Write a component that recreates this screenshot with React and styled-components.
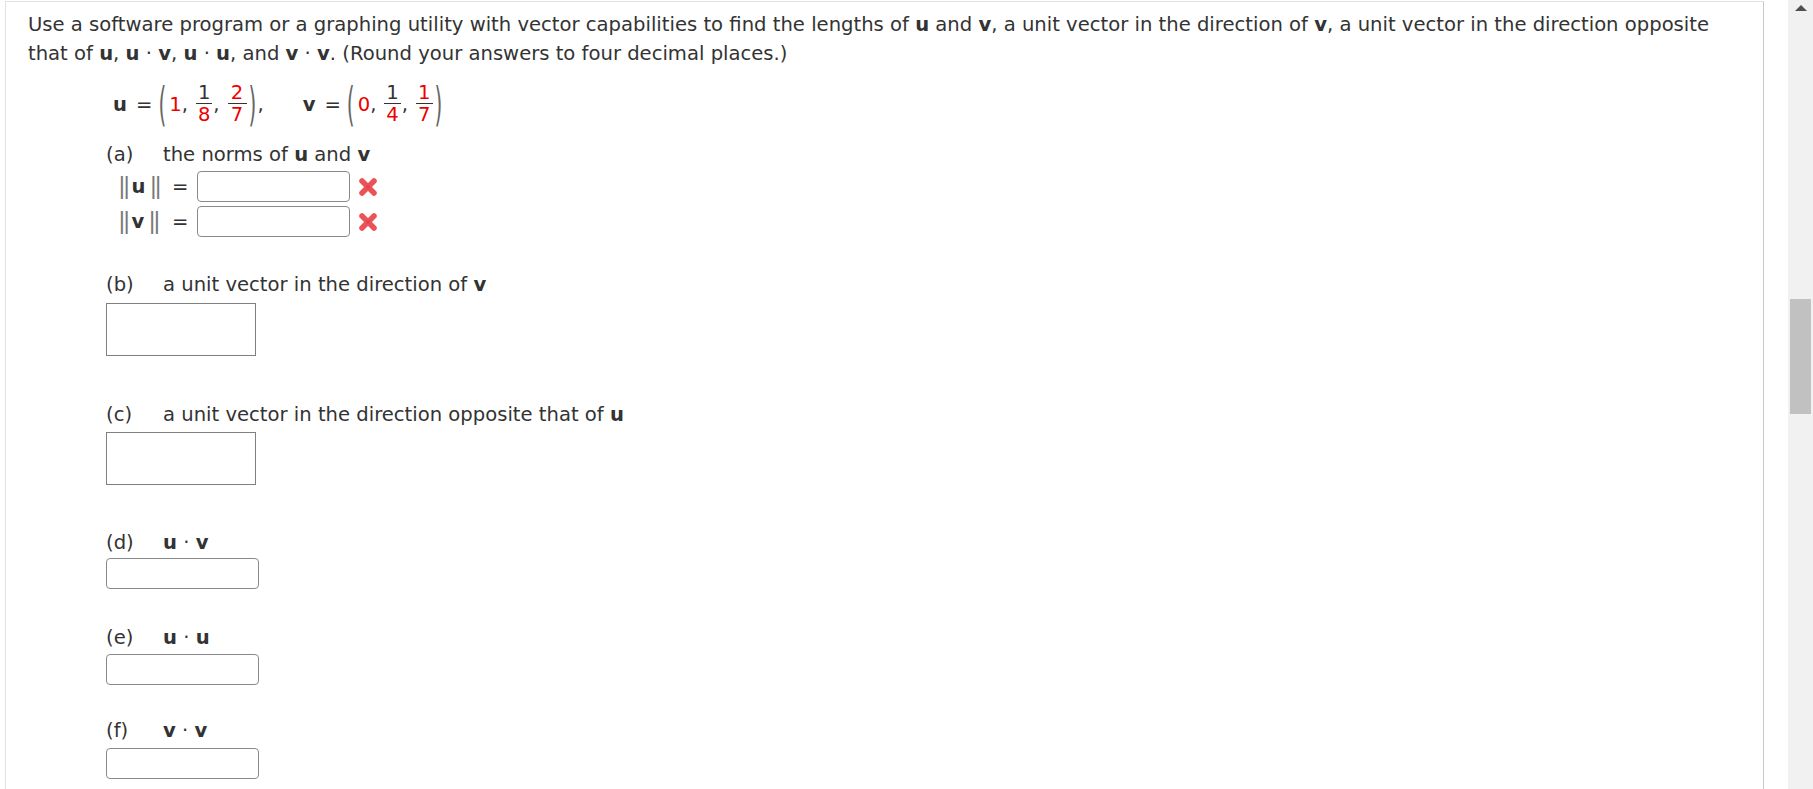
import React from 'react';
import styled, { createGlobalStyle } from 'styled-components';

const GlobalStyle = createGlobalStyle`
  html, body {
    margin: 0;
    padding: 0;
    background: #ffffff;
  }
  body {
    font-family: "DejaVu Sans", Verdana, sans-serif;
    color: #333333;
  }
`;

const XIcon = () => (
  <svg width="20" height="20" viewBox="0 0 20 20">
    <g strokeLinecap="round">
      <line x1="4" y1="4" x2="16" y2="16" stroke="#ea5358" strokeWidth="5.5" />
      <line x1="16" y1="4" x2="4" y2="16" stroke="#ea5358" strokeWidth="5.5" />
    </g>
    <circle cx="10" cy="10" r="1.8" fill="#dc444a" />
  </svg>
);

const App = () => {
  return (
    <Page>
      <GlobalStyle />
      <Main>
        <Frame>
          <Intro>
            Use a software program or a graphing utility with vector capabilities to find the lengths of <B>u</B> and{' '}
            <B>v</B>, a unit vector in the direction of <B>v</B>, a unit vector in the direction opposite that of{' '}
            <B>u</B>, <B>u</B> · <B>v</B>, <B>u</B> · <B>u</B>, and <B>v</B> · <B>v</B>. (Round your answers to four
            decimal places.)
          </Intro>

          <MathRow>
            <B>u</B>
            <Eq>=</Eq>
            <Paren>(</Paren>
            <Red>1</Red>
            <Comma>,</Comma>
            <Frac>
              <Num>1</Num>
              <Den $red>8</Den>
            </Frac>
            <Comma>,</Comma>
            <Frac $wide>
              <Num $red>2</Num>
              <Den $red>7</Den>
            </Frac>
            <Paren>)</Paren>
            <Comma>,</Comma>
            <Spacer />
            <B>v</B>
            <Eq>=</Eq>
            <Paren>(</Paren>
            <Red>0</Red>
            <Comma>,</Comma>
            <Frac>
              <Num>1</Num>
              <Den $red>4</Den>
            </Frac>
            <Comma>,</Comma>
            <Frac>
              <Num $red>1</Num>
              <Den $red>7</Den>
            </Frac>
            <Paren>)</Paren>
          </MathRow>

          <PartHead $mt={14}>
            <Letter>(a)</Letter>
            <span>
              the norms of <B>u</B> and <B>v</B>
            </span>
          </PartHead>
          <NormRow $mt={2}>
            <NormLabel>
              <Bars>||</Bars>
              <B>u</B>
              <Bars $right>||</Bars>
            </NormLabel>
            <NormEq>=</NormEq>
            <Input />
            <Mark>
              <XIcon />
            </Mark>
          </NormRow>
          <NormRow $mt={4}>
            <NormLabel>
              <Bars>||</Bars>
              <B>v</B>
              <Bars $right>||</Bars>
            </NormLabel>
            <NormEq>=</NormEq>
            <Input />
            <Mark>
              <XIcon />
            </Mark>
          </NormRow>

          <PartHead $mt={33}>
            <Letter>(b)</Letter>
            <span>
              a unit vector in the direction of <B>v</B>
            </span>
          </PartHead>
          <VectorBox $mt={4} />

          <PartHead $mt={44}>
            <Letter>(c)</Letter>
            <span>
              a unit vector in the direction opposite that of <B>u</B>
            </span>
          </PartHead>
          <VectorBox $mt={3} />

          <PartHead $mt={43}>
            <Letter>(d)</Letter>
            <span>
              <B>u</B> · <B>v</B>
            </span>
          </PartHead>
          <Input $mt={1} />

          <PartHead $mt={34}>
            <Letter>(e)</Letter>
            <span>
              <B>u</B> · <B>u</B>
            </span>
          </PartHead>
          <Input $mt={2} />

          <PartHead $mt={31}>
            <Letter>(f)</Letter>
            <span>
              <B>v</B> · <B>v</B>
            </span>
          </PartHead>
          <Input $mt={3} />
        </Frame>
      </Main>
      <Scrollbar>
        <UpArrow />
        <Thumb />
      </Scrollbar>
    </Page>
  );
};

const Page = styled.div`
  display: flex;
  height: 789px;
  overflow: hidden;
`;

const Main = styled.div`
  flex: 1;
  padding: 1px 24px 0 5px;
  display: flex;
`;

const Frame = styled.div`
  flex: 1;
  border-top: 1px solid #e2e2e2;
  border-left: 1px solid #e2e2e2;
  border-right: 1px solid #c8c8c8;
  padding: 8px 28px 0 22px;
  font-size: 19.6px;
  line-height: 29px;
  display: flex;
  flex-direction: column;
  align-items: flex-start;
`;

const Intro = styled.p`
  margin: 0;
`;

const B = styled.b`
  font-weight: bold;
  color: #333333;
`;

const MathRow = styled.div`
  display: flex;
  align-items: center;
  height: 44px;
  margin-top: 14px;
  padding-left: 85px;
`;

const Eq = styled.span`
  margin: 0 5px 0 9px;
`;

const Paren = styled.span`
  display: inline-block;
  color: #666666;
  font-size: 20px;
  line-height: 20px;
  transform: scaleY(2.3);
  margin: 0 1px;
`;

const Red = styled.span`
  color: #ee0000;
  margin-left: 2px;
`;

const Comma = styled.span`
  margin-right: 7px;
`;

const Frac = styled.span`
  display: inline-flex;
  flex-direction: column;
  align-items: stretch;
  text-align: center;
  line-height: 20px;
  min-width: ${({ $wide }) => ($wide ? '19px' : '16px')};
  margin: 0 1px;
`;

const Num = styled.span`
  color: ${({ $red }) => ($red ? '#ee0000' : '#333333')};
  padding: 0 2px;
  border-bottom: 1.5px solid #333333;
`;

const Den = styled.span`
  color: ${({ $red }) => ($red ? '#ee0000' : '#333333')};
  padding-top: 1px;
`;

const Spacer = styled.span`
  width: 32px;
`;

const PartHead = styled.div`
  display: flex;
  margin-top: ${({ $mt }) => $mt}px;
  padding-left: 78px;
`;

const Letter = styled.span`
  width: 57px;
`;

const NormRow = styled.div`
  display: flex;
  align-items: center;
  margin-top: ${({ $mt }) => $mt}px;
  padding-left: 90px;
`;

const NormLabel = styled.span`
  width: 54px;
  flex-shrink: 0;
  display: flex;
  align-items: center;
`;

const Bars = styled.span`
  color: #777777;
  font-size: 23px;
  line-height: 29px;
  letter-spacing: -3px;
  margin: ${({ $right }) => ($right ? '0 0 0 4px' : '0 4px 0 0')};
`;

const NormEq = styled.span`
  width: 25px;
  flex-shrink: 0;
`;

const Input = styled.div`
  width: 151px;
  height: 29px;
  flex-shrink: 0;
  border: 1px solid #8a8a8a;
  border-radius: 4px;
  background: #ffffff;
  margin-top: ${({ $mt }) => $mt || 0}px;
  margin-left: ${({ $mt }) => ($mt !== undefined ? '78px' : '0')};
`;

const Mark = styled.span`
  display: flex;
  margin-left: 8px;
`;

const VectorBox = styled.div`
  width: 148px;
  height: 51px;
  border: 1px solid #808080;
  margin-top: ${({ $mt }) => $mt}px;
  margin-left: 78px;
`;

const Scrollbar = styled.div`
  width: 25px;
  background: #f1f1f1;
  display: flex;
  flex-direction: column;
  align-items: center;
`;

const UpArrow = styled.div`
  margin-top: 5px;
  width: 0;
  height: 0;
  border-left: 6px solid transparent;
  border-right: 6px solid transparent;
  border-bottom: 6px solid #505050;
`;

const Thumb = styled.div`
  width: 21px;
  height: 115px;
  margin-top: 288px;
  background: #c1c1c1;
`;

export default App;
